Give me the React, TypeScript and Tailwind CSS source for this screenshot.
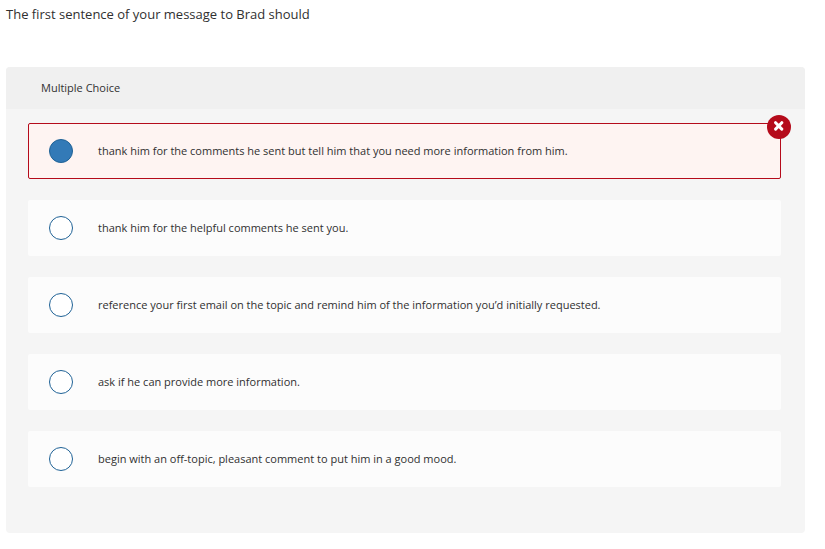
import { useState } from 'react';

const choices = [
  'thank him for the comments he sent but tell him that you need more information from him.',
  'thank him for the helpful comments he sent you.',
  'reference your first email on the topic and remind him of the information you’d initially requested.',
  'ask if he can provide more information.',
  'begin with an off-topic, pleasant comment to put him in a good mood.',
];

const wrong = 0;

export default function App() {
  const [picked, setPicked] = useState(0);

  return (
    <main className="min-h-screen bg-white pt-1 pr-5 pb-4 pl-1.5 font-['Open_Sans',sans-serif] text-[#303030]">
      <h1 className="text-[13px] leading-5">The first sentence of your message to Brad should</h1>

      <section role="radiogroup" aria-labelledby="question-type" className="mt-[43px] rounded-sm bg-[#f5f5f5] pb-[46px]">
        <h2 id="question-type" className="rounded-t-sm bg-[#f0f0f0] pl-[35px] text-[11px] leading-[42px]">
          Multiple Choice
        </h2>

        <div className="mt-3.5 mr-6 ml-[22px] flex flex-col gap-[21px]">
          {choices.map((text, i) => (
            <label
              key={text}
              className={`relative flex min-h-14 cursor-pointer items-center gap-[25px] rounded-xs border px-5 text-[11px] leading-4 ${
                picked === i && i === wrong ? 'border-[#b50b1b] bg-[#fef4f2]' : 'border-transparent bg-[#fcfcfc]'
              }`}
            >
              <input
                type="radio"
                name="choice"
                checked={picked === i}
                onChange={() => setPicked(i)}
                className="size-6 shrink-0 appearance-none rounded-full border border-[#1f6296] bg-white checked:bg-[#337ab7]"
              />
              <span>{text}</span>
              {picked === i && i === wrong && (
                <span className="absolute -top-[9px] -right-[11px] flex size-6 items-center justify-center rounded-full bg-[#b50b1b]">
                  <svg viewBox="0 0 12 12" className="size-3 text-white" aria-hidden="true">
                    <path d="M2.6 1.7l6.2 6.4M8.8 1.7l-6.2 6.4" stroke="currentColor" strokeWidth="3" strokeLinecap="round" />
                  </svg>
                </span>
              )}
            </label>
          ))}
        </div>
      </section>
    </main>
  );
}
